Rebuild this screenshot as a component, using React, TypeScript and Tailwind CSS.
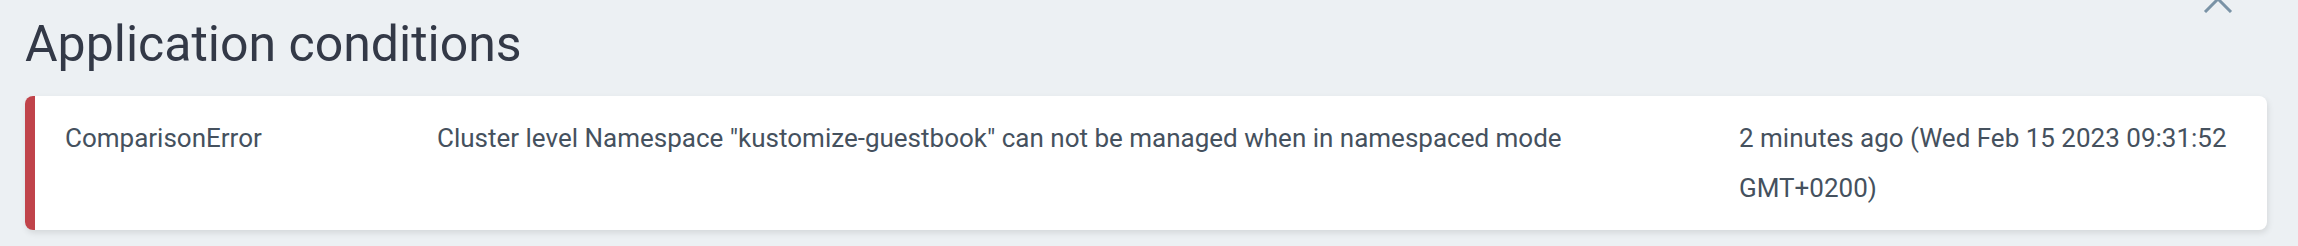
export default function App() {
  const condition = {
    type: 'ComparisonError',
    message: 'Cluster level Namespace "kustomize-guestbook" can not be managed when in namespaced mode',
    time: '2 minutes ago (Wed Feb 15 2023 09:31:52 GMT+0200)',
  }

  return (
    <div
      className="relative w-[2298px] h-[246px] overflow-hidden bg-[#ecf0f3] pl-[25px] pr-[31px] pt-[14px]"
      style={{ fontFamily: 'Roboto, "Liberation Sans", sans-serif' }}
    >
      <button className="absolute right-[65px] top-[-3px] w-[30px] h-[16px] text-[#7a93a6]">
        <svg width="30" height="16" viewBox="0 0 30 16" fill="none">
          <polyline points="2,15 15,2 28,15" stroke="currentColor" strokeWidth="3" />
        </svg>
      </button>

      <h2 className="text-[50px] leading-[60px] font-normal text-[#333947]">Application conditions</h2>

      <div className="mt-[22px] flex bg-white rounded-[8px] overflow-hidden shadow-[1px_3px_6px_rgba(0,0,0,0.1)]">
        <div className="w-[10px] shrink-0 bg-[#c0434a]" />
        <div className="flex-1 grid grid-cols-12 py-[17px] text-[26px] leading-[50px] text-[#45515e]">
          <div className="col-span-2 px-[30px]">{condition.type}</div>
          <div className="col-span-7 px-[30px]">{condition.message}</div>
          <div className="col-span-3 px-[30px]">{condition.time}</div>
        </div>
      </div>
    </div>
  )
}
